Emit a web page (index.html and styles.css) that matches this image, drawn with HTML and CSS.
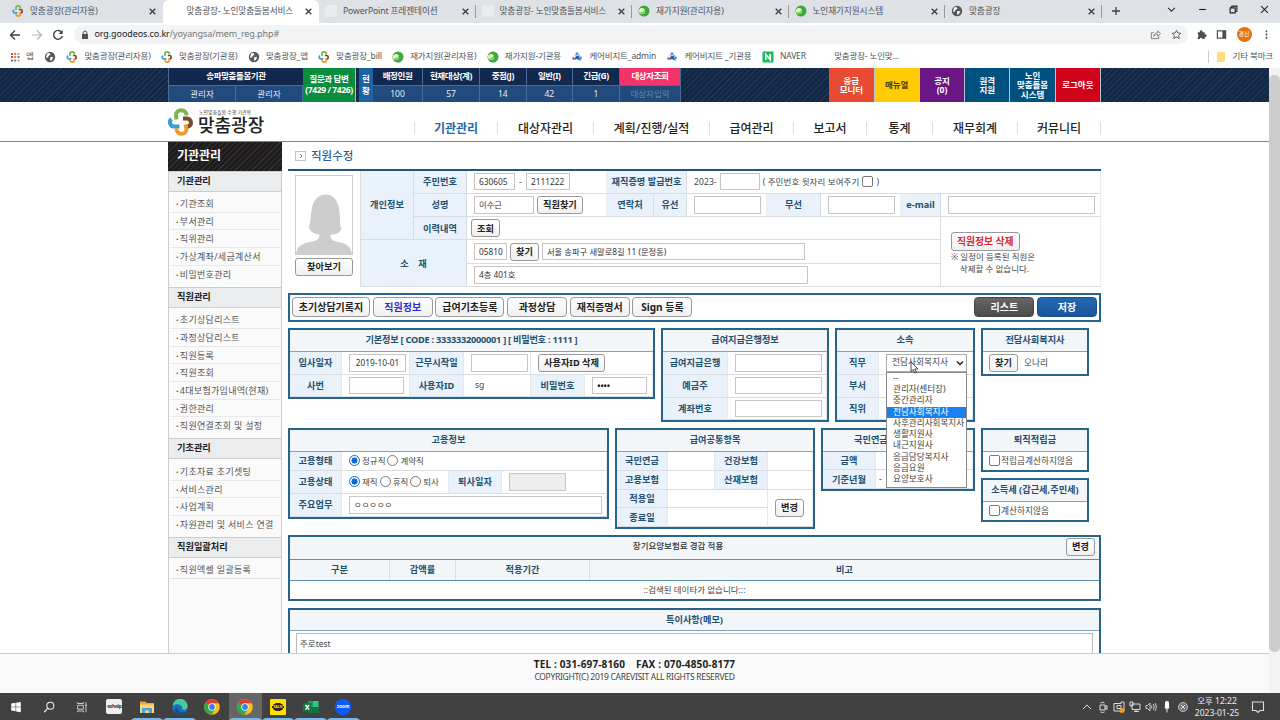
FILE: index.html
```html
<!DOCTYPE html>
<html lang="ko">
<head>
  <meta charset="UTF-8" />
  <title>맞춤광장- 노인맞춤돌봄서비스</title>
  <link rel="stylesheet" href="styles.css">
</head>

<body>
  <!-- shared icons -->
  <svg class="defs" width="0" height="0">
    <symbol id="i-logo" viewBox="0 0 26 28">
      <path d="M8.500 11.500L8 7.500a5 5 0 0 1 10.500 0" fill="none" stroke="#7ab648" stroke-width="4"/>
      <path d="M11.500 18.500H7a4.300 4.300 0 0 1-3.500-7.500" fill="none" stroke="#3b9fd0" stroke-width="4"/>
      <path d="M15 10.500h4a4.200 4.200 0 0 1 1.500 8h-2" fill="none" stroke="#7a4a2b" stroke-width="4"/>
      <path d="M8.500 20.500a5 5 0 0 0 10 .5l-1-4.500" fill="none" stroke="#ee9a2c" stroke-width="4"/>
    </symbol>
    <symbol id="i-globe" viewBox="0 0 12 12">
      <circle cx="6" cy="6" r="5.200" fill="#54585d"/>
      <path d="M3 2.500l2.500-.5 1 1.500-2 1.500-.5 1.500-2 .3zM6.500 6l2.800.3L8 8.800 6.500 10 6 8z" fill="#fff"/>
    </symbol>
    <symbol id="i-green" viewBox="0 0 12 12">
      <circle cx="6" cy="6" r="5.500" fill="#3aaa3f"/>
      <circle cx="4" cy="6" r="3" fill="#e9f3b8"/>
      <path d="M2.500 8q3 1 4-2.500" stroke="#3aaa3f" fill="none"/>
    </symbol>
    <symbol id="i-care" viewBox="0 0 12 12">
      <path d="M2 3l3 2-2 4 3-1 4 2-2-4 1-2-3 1z" fill="#2c5fa8"/>
      <circle cx="6" cy="2.800" r="1.500" fill="#4b8fd4"/>
      <circle cx="9.500" cy="7" r="1.400" fill="#4b8fd4"/>
      <circle cx="2.500" cy="7.500" r="1.300" fill="#8a5a9a"/>
    </symbol>
    <symbol id="i-chrome" viewBox="0 0 16 16">
      <circle cx="8" cy="8" r="7.800" fill="#fbc116"/>
      <path d="M8 8L1.200 4.100A7.800 7.800 0 0 1 14.800 4.200H8z" fill="#e33b2e"/>
      <path d="M8 8l-6.800-3.900A7.800 7.800 0 0 0 7.500 15.800L11.400 9.500z" fill="#2da94f"/>
      <circle cx="8" cy="8" r="3.700" fill="#fff"/>
      <circle cx="8" cy="8" r="2.900" fill="#3b7ded"/>
    </symbol>
    <symbol id="i-x" viewBox="0 0 8 8">
      <path d="M1.500 1.500l5 5M6.500 1.500l-5 5" stroke="#3c4043" stroke-width="1.200"/>
    </symbol>
  </svg>

  <div class="tabs">
    <div class="tab"><svg class="fav"><use href="#i-logo"/></svg><span>맞춤광장(관리자용)</span><svg class="x"><use href="#i-x"/></svg></div>
    <div class="tab active"><i class="fav"></i><span>맞춤광장- 노인맞춤돌봄서비스</span><svg class="x"><use href="#i-x"/></svg></div>
    <div class="tab line"><i class="fav blank"></i><span>PowerPoint 프레젠테이션</span><svg class="x"><use href="#i-x"/></svg></div>
    <div class="tab line"><i class="fav blank"></i><span>맞춤광장- 노인맞춤돌봄서비스</span><svg class="x"><use href="#i-x"/></svg></div>
    <div class="tab line"><svg class="fav"><use href="#i-green"/></svg><span>재가지원(관리자용)</span><svg class="x"><use href="#i-x"/></svg></div>
    <div class="tab line"><svg class="fav"><use href="#i-green"/></svg><span>노인재가지원시스템</span><svg class="x"><use href="#i-x"/></svg></div>
    <div class="tab line"><svg class="fav"><use href="#i-globe"/></svg><span>맞춤광장</span><svg class="x"><use href="#i-x"/></svg></div>
    <svg class="plus" viewBox="0 0 10 10"><path d="M5 1v8M1 5h8" stroke="#3c4043" stroke-width="1.300"/></svg>
    <div class="win">
      <svg viewBox="0 0 8 8"><path d="M1 2.500l3 3 3-3" fill="none" stroke="#333"/></svg>
      <svg viewBox="0 0 8 8"><path d="M1 4h6" stroke="#222"/></svg>
      <svg viewBox="0 0 8 8"><path d="M1 2.500h4.500V7H1zM2.500 2.500V1H7v4.500H5.500" fill="none" stroke="#222"/></svg>
      <svg viewBox="0 0 8 8"><path d="M1 1l6 6M7 1L1 7" stroke="#222" stroke-width=".9"/></svg>
    </div>
  </div>

  <div class="toolbar">
    <svg class="nav-ico" viewBox="0 0 12 12"><path d="M11 6H1.500M6 1.500L1.500 6 6 10.500" fill="none" stroke="#3c4043" stroke-width="1.300"/></svg>
    <svg class="nav-ico" viewBox="0 0 12 12"><path d="M1 6h9.500M6 1.500L10.500 6 6 10.500" fill="none" stroke="#b5b8bb" stroke-width="1.200"/></svg>
    <svg class="nav-ico" viewBox="0 0 12 12"><path d="M9.800 3.500A4.400 4.400 0 1 0 10.300 7" fill="none" stroke="#3c4043" stroke-width="1.400"/><path d="M10.700 1v4h-4z" fill="#3c4043"/></svg>
    <div class="omnibox">
      <svg class="lock" viewBox="0 0 8 10"><path d="M2.200 4V2.800a1.800 1.800 0 0 1 3.600 0V4" fill="none" stroke="#4b4f53"/><rect x="1" y="4" width="6" height="5" rx=".6" fill="#4b4f53"/></svg>
      <span class="url"><b>org.goodeos.co.kr</b>/yoyangsa/mem_reg.php#</span>
      <svg class="obi" viewBox="0 0 12 12"><path d="M4 4H1.500v6.500h8V8" fill="none" stroke="#777"/><path d="M4 8c.3-2.500 2-4 4.500-4V2l3 3-3 3V6C6.500 6 5 6.500 4 8z" fill="none" stroke="#777" stroke-width=".9"/></svg>
      <svg class="obi" viewBox="0 0 12 12"><path d="M6 1.300l1.400 3 3.300.4-2.400 2.300.6 3.300L6 8.700l-2.900 1.600.6-3.300L1.300 4.700l3.300-.4z" fill="none" stroke="#555"/></svg>
    </div>
    <div class="exts">
      <svg viewBox="0 0 12 12"><path d="M2 3.500h2.200a1.500 1.500 0 1 1 2.800 0h2.500V6a1.500 1.500 0 1 1 0 2.800V11H7a1.400 1.400 0 0 0-2.800 0H2V8.500a1.400 1.400 0 0 0 0-2.600z" fill="#4b4f53"/></svg>
      <svg viewBox="0 0 12 12"><rect x="1.500" y="2" width="9" height="8" fill="none" stroke="#4b4f53" stroke-width="1.300"/><path d="M7 2h3.500v8H7z" fill="#4b4f53"/></svg>
      <span class="avatar">경신</span>
      <svg viewBox="0 0 12 12"><path d="M6 1.500v2M6 5v2M6 8.500v2" stroke="#4b4f53" stroke-width="1.700"/></svg>
    </div>
  </div>

  <div class="bookmarks">
    <div class="bm apps"><svg viewBox="0 0 12 12"><path d="M2 3h2M2 6h2M2 9.500h2" stroke="#d9453a" stroke-width="2"/><path d="M5.200 3h2M5.200 6h2" stroke="#e07b3c" stroke-width="2"/><path d="M5.200 9.500h2M8.500 6h2" stroke="#3f7ed8" stroke-width="2"/><path d="M8.500 3h2M8.500 9.500h2" stroke="#d9a53a" stroke-width="2"/></svg><span>앱</span></div>
    <div class="bm"><svg><use href="#i-globe"/></svg></div>
    <div class="bm"><svg><use href="#i-logo"/></svg><span>맞춤광장(관리자용)</span></div>
    <div class="bm"><svg><use href="#i-logo"/></svg><span>맞춤광장(기관용)</span></div>
    <div class="bm"><svg><use href="#i-globe"/></svg><span>맞춤광장_앱</span></div>
    <div class="bm"><svg><use href="#i-logo"/></svg><span>맞춤광장_bill</span></div>
    <div class="bm"><svg><use href="#i-green"/></svg><span>재가지원(관리자용)</span></div>
    <div class="bm"><svg><use href="#i-green"/></svg><span>재가지원-기관용</span></div>
    <div class="bm"><svg><use href="#i-care"/></svg><span>케어비지트_admin</span></div>
    <div class="bm"><svg><use href="#i-care"/></svg><span>케어비지트 _기관용</span></div>
    <div class="bm"><svg viewBox="0 0 12 12"><rect x=".5" y=".5" width="11" height="11" fill="#0fbf60"/><path d="M3.800 9V3.500l4.400 5V3" fill="none" stroke="#fff" stroke-width="1.700"/></svg><span>NAVER</span></div>
    <div class="bm"><svg></svg><span>맞춤광장- 노인맞...</span></div>
    <div class="bm other"><svg viewBox="0 0 12 12"><path d="M2 1h8v9l-2 1H2z" fill="#fbdf7c"/></svg><span>기타 북마크</span></div>
  </div>

  <div class="viewport">
    <div class="page">
      <div class="topbar">
        <div class="wrap">
          <div class="org">
            <b>송파맞춤돌봄기관</b>
            <span>관리자</span><span>관리자</span>
          </div>
          <div class="qna">질문과 답변<br>(7429 / 7426)</div>
          <div class="now">현<br>황</div>
          <div class="stats">
            <div><b>배정인원</b><span>100</span></div>
            <div><b>현재대상(계)</b><span>57</span></div>
            <div><b>중점(J)</b><span>14</span></div>
            <div><b>일반(I)</b><span>42</span></div>
            <div><b>긴급(G)</b><span>1</span></div>
            <div class="search"><b>대상자조회</b><span>대상자입력</span></div>
          </div>
          <div class="quick">
            <div class="q-red">응급<br>모니터</div>
            <div class="q-yellow">매뉴얼</div>
            <div class="q-purple">공지<br>(0)</div>
            <div class="q-blue">원격<br>지원</div>
            <div class="q-blue">노인<br>맞춤돌봄<br>시스템</div>
            <div class="q-out">로그아웃</div>
          </div>
        </div>
      </div>

      <div class="header">
        <div class="wrap">
          <div class="logo">
            <svg><use href="#i-logo"/></svg>
            <div><small>노인맞춤돌봄 수행 기관용</small><strong>맞춤광장</strong></div>
          </div>
          <div class="gnb">
            <a class="on">기관관리</a>
            <a>대상자관리</a>
            <a>계획/진행/실적</a>
            <a>급여관리</a>
            <a>보고서</a>
            <a>통계</a>
            <a>재무회계</a>
            <a>커뮤니티</a>
          </div>
        </div>
      </div>

      <div class="wrap content">
        <div class="side">
          <h2>기관관리</h2>
          <h3>기관관리</h3>
          <ul><li>기관조회</li><li>부서관리</li><li>직위관리</li><li>가상계좌/세금계산서</li><li>비밀번호관리</li></ul>
          <h3>직원관리</h3>
          <ul><li>초기상담리스트</li><li>과정상담리스트</li><li>직원등록</li><li>직원조회</li><li>4대보험가입내역(현재)</li><li>권한관리</li><li>직원연결조회 및 설정</li></ul>
          <h3>기초관리</h3>
          <ul><li>기초자료 초기셋팅</li><li>서비스관리</li><li>사업계획</li><li>자원관리 및 서비스 연결</li></ul>
          <h3>직원일괄처리</h3>
          <ul class="last"><li>직원엑셀 일괄등록</li></ul>
        </div>

        <div class="main">
          <h1><i><svg viewBox="0 0 6 6"><path d="M2 1l2 2-2 2" fill="none" stroke="#6b7f99"/></svg></i>직원수정</h1>

          <div class="person">
            <div class="photo">
              <svg viewBox="0 0 58 80" preserveAspectRatio="none"><path d="M31 19C22 19 17 26 16 36C15 43 15 48 13.500 52C14 57 18 59 24 60C25 64 22 66 18 67C8 69 1 71 0 80H58C57 71 50 69 41 67C37 66 35 64 36 60C42 60 46 58 47 54C45 50 46 42 45 36C44 25 38 19 31 19Z" fill="#cdcdcd"/></svg>
              <button class="btn">찾아보기</button>
            </div>
            <div class="th tall3">개인정보</div>
            <div class="th">주민번호</div>
            <div class="td"><span class="inp w41">630605</span><span class="dash">-</span><span class="inp w44">2111222</span></div>
            <div class="th span2">재직증명 발급번호</div>
            <div class="td rest issue">2023-<span class="inp w40"></span><span>( 주민번호 뒷자리 보여주기</span><i class="check"></i><span>)</span></div>

            <div class="th">성명</div>
            <div class="td"><span class="inp w60">이수근</span><button class="btn">직원찾기</button></div>
            <div class="th">연락처</div>
            <div class="th">유선</div>
            <div class="td"><span class="inp w67"></span></div>
            <div class="th">무선</div>
            <div class="td"><span class="inp w67"></span></div>
            <div class="th">e-mail</div>
            <div class="td"><span class="inp w147"></span></div>

            <div class="th">이력내역</div>
            <div class="td span7 tight"><button class="btn">조회</button></div>
            <div class="td tall3 del">
              <button class="btn red">직원정보 삭제</button>
              <p>※ 일정이 등록된 직원은<br>&nbsp;&nbsp;&nbsp; 삭제할 수 없습니다.</p>
            </div>

            <div class="th addr">소&nbsp;&nbsp;&nbsp; 재</div>
            <div class="td span7"><span class="inp w33">05810</span><button class="btn">찾기</button><span class="inp w263">서울 송파구 새말로8길 11 (문정동)</span></div>
            <div class="td span7"><span class="inp w334">4층 401호</span></div>
          </div>

          <div class="actions">
            <button class="btn w78">초기상담기록지</button>
            <button class="btn on">직원정보</button>
            <button class="btn w69">급여기초등록</button>
            <button class="btn">과정상담</button>
            <button class="btn">재직증명서</button>
            <button class="btn">Sign 등록</button>
            <button class="btn list">리스트</button>
            <button class="btn save">저장</button>
          </div>

          <div class="row row1">
            <div class="box">
              <h4 class="narrow">기본정보 [ CODE : 3333332000001 ] [ 비밀번호 : 1111 ]</h4>
              <div class="grid basic">
                <div class="th">입사일자</div>
                <div class="td"><span class="inp w57 mid">2019-10-01</span></div>
                <div class="th">근무시작일</div>
                <div class="td"><span class="inp w57"></span></div>
                <div class="td span2"><button class="btn">사용자ID 삭제</button></div>
                <div class="th">사번</div>
                <div class="td"><span class="inp w55"></span></div>
                <div class="th">사용자ID</div>
                <div class="td"><span class="plain">sg</span></div>
                <div class="th">비밀번호</div>
                <div class="td"><span class="inp w55 pw">••••</span></div>
              </div>
            </div>
            <div class="box">
              <h4>급여지급은행정보</h4>
              <div class="grid bank">
                <div class="th">급여지급은행</div><div class="td"><span class="inp w87"></span></div>
                <div class="th">예금주</div><div class="td"><span class="inp w87"></span></div>
                <div class="th">계좌번호</div><div class="td"><span class="inp w87"></span></div>
              </div>
            </div>
            <div class="box">
              <h4>소속</h4>
              <div class="grid dept">
                <div class="th">직무</div>
                <div class="td">
                  <div class="select">전담사회복지사
                    <svg class="caret" viewBox="0 0 8 8"><path d="M1 2.500l3 3 3-3" fill="none" stroke="#222" stroke-width="1.500"/></svg>
                    <ul class="options">
                      <li>--</li>
                      <li>관리자(센터장)</li>
                      <li>중간관리자</li>
                      <li class="sel">전담사회복지사</li>
                      <li>사후관리사회복지사</li>
                      <li>생활지원사</li>
                      <li>내근지원사</li>
                      <li>응급담당복지사</li>
                      <li>응급요원</li>
                      <li>요양보호사</li>
                    </ul>
                    <svg class="cursor" viewBox="0 0 9 13"><path d="M1 1v9.500l2.300-2 1.500 3.500 1.500-.7-1.500-3.300H8z" fill="#fff" stroke="#222" stroke-width=".8"/></svg>
                  </div>
                </div>
                <div class="th">부서</div><div class="td"></div>
                <div class="th">직위</div><div class="td"></div>
              </div>
            </div>
            <div class="box">
              <h4>전담사회복지사</h4>
              <div class="single find"><button class="btn">찾기</button><span>오나리</span></div>
            </div>
          </div>

          <div class="row row2">
            <div class="box">
              <h4>고용정보</h4>
              <div class="grid employ">
                <div class="th">고용형태</div>
                <div class="td rest"><i class="radio on"></i>정규직<i class="radio"></i>계약직</div>
                <div class="th">고용상태</div>
                <div class="td"><i class="radio on"></i>재직<i class="radio"></i>휴직<i class="radio"></i>퇴사</div>
                <div class="th">퇴사일자</div>
                <div class="td"><span class="inp w57 off"></span></div>
                <div class="th">주요업무</div>
                <div class="td rest"><span class="inp w253">ㅇㅇㅇㅇㅇ</span></div>
              </div>
            </div>
            <div class="box">
              <h4>급여공통항목</h4>
              <div class="grid common">
                <div class="th">국민연금</div><div class="td"></div><div class="th">건강보험</div><div class="td"></div>
                <div class="th">고용보험</div><div class="td"></div><div class="th">산재보험</div><div class="td"></div>
                <div class="th">적용일</div><div class="td span2"></div>
                <div class="td tall2"><button class="btn">변경</button></div>
                <div class="th">종료일</div><div class="td span2"></div>
              </div>
            </div>
            <div class="box">
              <h4 class="pension-title">국민연금</h4>
              <div class="grid pension">
                <div class="th">금액</div><div class="td"></div>
                <div class="th">기준년월</div><div class="td">-</div>
              </div>
            </div>
            <div class="stack">
              <div class="box">
                <h4>퇴직적립금</h4>
                <div class="single"><i class="check"></i>적립금계산하지않음</div>
              </div>
              <div class="box">
                <h4>소득세 (갑근세,주민세)</h4>
                <div class="single"><i class="check"></i>계산하지않음</div>
              </div>
            </div>
          </div>

          <div class="box care">
            <div class="care-title"><span>장기요양보험료 경감 적용</span><button class="btn">변경</button></div>
            <div class="care-head"><div>구분</div><div>감액률</div><div>적용기간</div><div>비고</div></div>
            <div class="empty">::검색된 데이타가 없습니다:::</div>
          </div>

          <div class="box memo">
            <h4>특이사항(메모)</h4>
            <div class="textarea">주로test</div>
          </div>
        </div>
      </div>

      <div class="footer">
        <b>TEL : 031-697-8160 &nbsp;&nbsp; FAX : 070-4850-8177</b>
        <span>COPYRIGHT(C) 2019 CAREVISIT ALL RIGHTS RESERVED</span>
      </div>
    </div>
    <div class="scroll"><div class="thumb"></div></div>
  </div>

  <div class="taskbar">
    <div class="apps-row">
      <div><svg viewBox="0 0 16 16"><path d="M2.500 4l5-.8v4.500h-5zM8.200 3.100l5.300-.9v5.500H8.200zM2.500 8.400h5v4.500l-5-.8zM8.200 8.400h5.300v5.500l-5.300-.9z" fill="#fff"/></svg></div>
      <div><svg viewBox="0 0 16 16"><circle cx="9.500" cy="6.500" r="4" fill="none" stroke="#eee" stroke-width="1.200"/><path d="M6.500 9.500L2.500 14" stroke="#eee" stroke-width="1.300"/></svg></div>
      <div><svg viewBox="0 0 16 16"><path d="M3 2.500v1.500h6.500V2.500M3 14v-1.500h6.500V14M3 6h6.500v4.500H3zM12.500 2.500V14M11.500 6h2" fill="none" stroke="#ddd"/></svg></div>
      <div class="ez"><span>ezhelp</span></div>
      <div class="run"><svg viewBox="0 0 16 16"><path d="M1 2.500h5.500L8 4h7v10H1z" fill="#e8a93a"/><path d="M1 5.500h14V14H1z" fill="#fbd676"/><path d="M3 14V9h10v5h-3v-2.500H6V14z" fill="#4aa3dd"/></svg></div>
      <div class="run"><svg viewBox="0 0 16 16"><circle cx="8" cy="8" r="7.600" fill="#1a6fc4"/><path d="M.6 7A7.500 7.500 0 0 1 15.600 7.500c0 2.500-2 3.500-4.500 3-1.500-.3-1-1-.9-2C10.200 5 4 4 .6 7z" fill="#48cba0"/><path d="M5.500 8c-.5 4 2.500 6 7.500 5-3 4-8 3-9.500 0-1-2.500 0-4.500 2-5z" fill="#174f92"/></svg></div>
      <div><svg><use href="#i-chrome"/></svg></div>
      <div class="run cur"><svg><use href="#i-chrome"/></svg></div>
      <div class="run talk"><span>TALK</span></div>
      <div class="run"><svg viewBox="0 0 16 16"><path d="M5 2h10.500v12H5z" fill="#1f9e5e"/><path d="M10 2h5.500v6H10z" fill="#33c481"/><path d="M5 8h10.500v6H5z" fill="#17703f"/><rect y="4" width="8.500" height="8.500" fill="#107c41"/><path d="M2.500 6l3.600 4.600M6.100 6L2.500 10.600" stroke="#fff" stroke-width="1.300"/></svg></div>
      <div class="run zm"><span>zoom</span></div>
    </div>
    <div class="tray">
      <svg viewBox="0 0 12 12"><path d="M2 8l4-4 4 4" fill="none" stroke="#ddd"/></svg>
      <svg viewBox="0 0 12 12"><path d="M3 4h5v5H3zM8 6l2-1.500v4L8 7M3.500 2q2-1.500 4 0M3.500 11q2 1.200 4 0" fill="none" stroke="#ddd"/></svg>
      <svg viewBox="0 0 12 12"><path d="M1 2.500h7V1h3v9H1zM4 4.500h4v3H4z" fill="none" stroke="#ddd"/><circle cx="9" cy="9.500" r="2.500" fill="#f09a2a"/></svg>
      <svg viewBox="0 0 12 12"><path d="M3 3h8v5.500H3zM5 10.500h5M7 8.500v2M1 1h3v4H1z" fill="none" stroke="#ddd"/></svg>
      <svg viewBox="0 0 12 12"><path d="M1 4.500h1.500L5 2v8L2.500 7.500H1zM6.500 4.500q1 1.500 0 3M8.300 3q2 3 0 6M10.200 2q2.500 4 0 8" fill="none" stroke="#ddd" stroke-width=".9"/></svg>
      <svg viewBox="0 0 12 12"><rect x="4" y="0" width="4" height="7.500" rx="1.500" fill="#fff"/><path d="M6 7v4.500M3.500 6.500q2.500 3 5 0" fill="none" stroke="#ddd"/></svg>
      <svg viewBox="0 0 12 12"><circle cx="6" cy="6" r="4.500" fill="#777" stroke="#bbb"/><path d="M4 4l4 4M8 4L4 8" stroke="#ddd"/></svg>
      <div class="clock">오후 12:22<br>2023-01-25</div>
      <svg class="noti" viewBox="0 0 14 14"><path d="M1.500 2h11v8.500H9l-2 2-2-2H1.500z" fill="none" stroke="#ddd" stroke-width="1.100"/></svg>
    </div>
  </div>
</body>
</html>
```
FILE: styles.css
```css
* {
  box-sizing: border-box;
  margin: 0;
  padding: 0;
}

body {
  width: 1280px;
  height: 720px;
  overflow: hidden;
  display: flex;
  flex-direction: column;
  background-color: #fff;
  font-family: "Noto Sans", "Noto Sans CJK KR", sans-serif;
  font-size: 8.5px;
  line-height: 1.2;
  color: #444;
  white-space: nowrap;
}

ul {
  list-style: none;
}

svg {
  display: block;
  flex: none;
}

.defs {
  position: absolute;
}

/* browser tabs */
.tabs {
  height: 23px;
  flex: none;
  display: flex;
  align-items: stretch;
  padding-left: 6px;
  background-color: #dee1e6;
}

.tab {
  width: 156.500px;
  height: 22px;
  display: flex;
  align-items: center;
  padding: 0 6px;
  font-size: 8.7px;
  letter-spacing: -0.15px;
  color: #50545a;
}

.tab .fav {
  width: 12px;
  height: 12px;
  margin-right: 6px;
}

.tab .fav.blank {
  background-color: #e9ebee;
}

.tab span {
  flex: 1;
}

.tab .x {
  width: 9px;
  height: 9px;
}

.tab.active {
  height: 23px;
  background-color: #fff;
  border-radius: 6px 6px 0 0;
}

.tab.line {
  position: relative;
}

.tab.line::after {
  content: "";
  position: absolute;
  right: 0;
  top: 5px;
  width: 1px;
  height: 13px;
  background-color: #96999e;
}

.plus {
  width: 10px;
  height: 10px;
  margin: 6px 0 0 9px;
}

.win {
  display: flex;
  gap: 22px;
  margin-left: auto;
  padding: 5px 11px 0 0;
}

.win svg {
  width: 9px;
  height: 9px;
}

/* address bar */
.toolbar {
  height: 22px;
  flex: none;
  display: flex;
  align-items: center;
  padding: 2px 9px 1px;
}

.nav-ico {
  width: 12px;
  height: 12px;
  margin-right: 9.5px;
}

.omnibox {
  flex: none;
  width: 1114px;
  height: 19px;
  display: flex;
  align-items: center;
  gap: 10px;
  padding: 0 6px 0 7px;
  border-radius: 10px;
  background-color: #f1f3f4;
}

.lock {
  width: 8px;
  height: 10px;
}

.url {
  flex: 1;
  margin-left: -4px;
  font-size: 9px;
  letter-spacing: -0.1px;
  color: #777;
}

.url b {
  font-weight: 400;
  color: #222;
}

.obi {
  width: 11px;
  height: 11px;
}

.exts {
  display: flex;
  align-items: center;
  gap: 9.5px;
  margin-left: 8px;
}

.exts svg {
  width: 11px;
  height: 11px;
}

.avatar {
  width: 15px;
  height: 15px;
  border-radius: 50%;
  background-color: #e8710a;
  color: #fff;
  font-size: 6px;
  line-height: 15px;
  text-align: center;
}

.bookmarks {
  height: 23px;
  flex: none;
  display: flex;
  align-items: center;
  gap: 10.400px;
  padding: 0 7px 0 9px;
}

.bm {
  display: flex;
  align-items: center;
  gap: 6px;
  letter-spacing: -0.15px;
  color: #50545a;
}

.bm svg {
  width: 12px;
  height: 12px;
}

.bm.apps {
  gap: 5px;
}

.bm.other {
  margin-left: auto;
  padding-left: 6px;
  border-left: 1px solid #ccc;
}

/* site */
.viewport {
  height: 625px;
  flex: none;
  display: flex;
}

.page {
  width: 1269px;
  height: 625px;
  display: flex;
  flex-direction: column;
}

.scroll {
  width: 11px;
  padding-top: 7px;
  background-color: #f3f3f3;
}

.thumb {
  height: 577px;
  border-radius: 5px;
  background-color: #cdcdcd;
}

.wrap {
  width: 933px;
  margin-left: 168px;
  display: flex;
}

.topbar {
  height: 34px;
  flex: none;
  background: repeating-linear-gradient(135deg, #132845 0 3px, #1d3655 3px 4px);
}

.topbar b,
.topbar span {
  display: flex;
  align-items: center;
  justify-content: center;
  height: 17px;
}

.topbar b {
  background-color: #11294f;
  color: #fff;
  letter-spacing: -0.4px;
}

.topbar span {
  background-color: #224a7d;
  color: #e6edf5;
}

.org {
  width: 135px;
  display: grid;
  grid-template-columns: 1fr 1fr;
  border-left: 1px solid #4a6b95;
}

.org b {
  grid-column: span 2;
}

.org span {
  border-top: 1px solid #4a6b95;
  border-right: 1px solid #4a6b95;
}

.qna {
  width: 53px;
  padding-top: 6px;
  background-color: #0c8c3f;
  border-right: 1px solid #9fc7ae;
  color: #fff;
  font-weight: 700;
  line-height: 10.5px;
  text-align: center;
  letter-spacing: -0.4px;
}

.now {
  width: 14px;
  margin-left: 3px;
  padding-top: 5px;
  background-color: #1c62a5;
  color: #fff;
  font-weight: 700;
  line-height: 12px;
  text-align: center;
}

.stats {
  display: grid;
  grid-template-columns: 50px 57px 46.500px 46.500px 47px 61px;
}

.stats div {
  border-right: 1px solid #4a6b95;
}

.stats span {
  border-top: 1px solid #4a6b95;
}

.stats .search b {
  background-color: #f2326b;
}

.stats .search span {
  color: #6685aa;
}

.quick {
  display: grid;
  grid-template-columns: repeat(6, 45.3px);
  margin-left: auto;
}

.quick div {
  display: flex;
  align-items: center;
  justify-content: center;
  border-right: 1px solid #b9c3cf;
  color: #fff;
  font-weight: 700;
  font-size: 8.5px;
  line-height: 9.5px;
  text-align: center;
}

.quick .q-red {
  background-color: #e84b31;
}

.quick .q-yellow {
  background-color: #ffcb05;
  color: #4a3a12;
}

.quick .q-purple {
  background-color: #6a1685;
}

.quick .q-blue {
  background-color: #00517f;
}

.quick .q-out {
  background-color: #d0021b;
}

.header {
  height: 40px;
  flex: none;
  border-bottom: 1px solid #5d9098;
}

.logo {
  width: 246px;
  display: flex;
  padding-top: 6px;
}

.logo svg {
  width: 26px;
  height: 28px;
}

.logo small {
  display: block;
  margin: 1px 0 0 5px;
  font-size: 5px;
  line-height: 6px;
  letter-spacing: -0.1px;
}

.logo strong {
  display: block;
  margin-left: 4px;
  font-size: 18px;
  line-height: 21px;
  font-weight: 500;
  color: #222;
}

.gnb {
  height: 40px;
  display: grid;
  grid-template-columns: 83px 96px 116px 84px 73px 66px 85px 84px;
  padding-top: 20px;
}

.gnb a {
  height: 13px;
  line-height: 13px;
  border-left: 1px solid #ddd;
  text-align: center;
  font-size: 12px;
  font-weight: 500;
  color: #222;
}

.gnb a:last-child {
  border-right: 1px solid #ddd;
}

.gnb .on {
  color: #1f6aa5;
  font-weight: 700;
}

.content {
  height: 511px;
  overflow: hidden;
}

/* left menu */
.side {
  width: 114px;
  height: 520px;
  flex: none;
  margin-right: 6px;
  border: 1px solid #ccc;
  border-top: 0;
  background-color: #fafafa;
}

.side h2 {
  height: 28.500px;
  margin: 0 -1px;
  padding-left: 9px;
  background: repeating-linear-gradient(135deg, #1e1c1d 0 3px, #343233 3px 4px);
  color: #fff;
  font-size: 12px;
  line-height: 28px;
}

.side h3 {
  height: 21px;
  padding-left: 8px;
  border-top: 1px solid #ccc;
  border-bottom: 1px solid #ccc;
  background-color: #ebecee;
  color: #222;
  font-size: 9.2px;
  line-height: 18px;
}

.side ul {
  padding: 3.5px 1px 3.3px;
}

.side li {
  height: 17.7px;
  padding-left: 6px;
  border-bottom: 1px solid #e8e8e8;
  font-size: 9px;
  line-height: 18px;
  letter-spacing: 0.3px;
  color: #555;
}

.side li:last-child {
  border-bottom: 0;
}

.side .last li {
  border-bottom: 1px solid #e0e0e0;
}

.side li::before {
  content: "·";
  margin-right: 1px;
  font-weight: 700;
}

/* form */
.main {
  width: 813px;
  flex: none;
}

h1 {
  height: 26.500px;
  display: flex;
  align-items: center;
  padding: 1px 0 0 7px;
  font-size: 11.5px;
  font-weight: 500;
  color: #2a5f95;
}

h1 i {
  width: 11px;
  height: 10px;
  margin-right: 5px;
  padding: 1px 2px;
  border: 1px solid #bcc5d0;
}

h1 svg {
  width: 6px;
  height: 6px;
}

.th,
.td {
  display: flex;
  align-items: center;
  border-right: 1px solid #d9dde0;
  border-bottom: 1px solid #d9dde0;
}

.th {
  justify-content: center;
  background-color: #e9f2fa;
  color: #24506f;
  font-size: 9.2px;
  font-weight: 700;
}

.td {
  gap: 3px;
  padding-left: 7px;
}

.person {
  display: grid;
  grid-template-columns: 73px 53px 53px 140px 47px 33px 80px 54px 80px 40px 160px;
  grid-template-rows: repeat(5, 23.300px);
  border-top: 2px solid #24557f;
}

.person .td:not(.span7) {
  border-right-color: #e9eef2;
}

.photo {
  grid-row: span 5;
  padding: 4px 0 0 7px;
  border-right: 1px solid #ddd;
}

.photo svg {
  width: 58px;
  height: 80px;
  border: 1px solid #ccc;
}

.photo .btn {
  width: 58px;
  margin-top: 3px;
}

.tall2 {
  grid-row: span 2;
}

.tall3 {
  grid-row: span 3;
}

.span2 {
  grid-column: span 2;
}

.span7 {
  grid-column: span 7;
}

.person .rest {
  grid-column: span 5;
}

.person .td.tight {
  padding-left: 4px;
}

.person .addr {
  grid-row: span 2;
  grid-column: 2 / span 2;
}

.issue {
  letter-spacing: 0.1px;
}

.del {
  flex-direction: column;
  align-items: flex-start;
  justify-content: center;
  gap: 0;
  padding: 3px 0 0 10px;
}

.del p {
  line-height: 12px;
}

.inp {
  height: 17.500px;
  flex: none;
  padding-left: 4px;
  border: 1px solid #c6c6c6;
  background-color: #fff;
  font-size: 8.3px;
  line-height: 16px;
  color: #333;
}

.inp.mid {
  padding: 0;
  text-align: center;
}

.inp.off {
  background-color: #eee;
}

.inp.pw {
  font-size: 10px;
  letter-spacing: -0.6px;
  color: #111;
}

.plain {
  padding-left: 4px;
}

.dash {
  width: 3px;
  margin: 0 1px;
}

.w33 { width: 33px; }
.w40 { width: 40px; }
.w41 { width: 41px; }
.w44 { width: 44px; }
.w55 { width: 55px; }
.w57 { width: 57px; }
.w60 { width: 60px; }
.w67 { width: 67px; }
.w87 { width: 87px; }
.w147 { width: 147px; }
.w253 { width: 253px; }
.w263 { width: 263px; }
.w334 { width: 334px; }

.btn {
  height: 18px;
  flex: none;
  padding: 0 5px;
  border: 1px solid #999;
  border-radius: 3px;
  background: linear-gradient(#fff, #f0f0f0);
  font-family: inherit;
  font-size: 9.2px;
  font-weight: 700;
  line-height: 15px;
  color: #222;
}

.btn.red {
  height: 19px;
  font-size: 9.8px;
  color: #e0252f;
}

.check {
  width: 11px;
  height: 11px;
  flex: none;
  border: 1px solid #777;
  border-radius: 2px;
  background-color: #fff;
}

.radio {
  width: 11px;
  height: 11px;
  flex: none;
  border: 1px solid #777;
  border-radius: 50%;
  background-color: #fff;
}

.radio.on {
  border-color: #0b6bd3;
  background: radial-gradient(circle, #0b6bd3 0 2.800px, #fff 3.300px);
}

.actions {
  height: 29px;
  display: flex;
  align-items: center;
  gap: 2.700px;
  margin: 6px 0 6.500px;
  padding: 0 2px;
  border: 2px solid #28638c;
}

.actions .btn {
  width: 60px;
  height: 20px;
  padding: 0;
  border-radius: 4px;
  font-size: 10px;
}

.actions .w78 {
  width: 78px;
}

.actions .w69 {
  width: 69px;
}

.actions .on {
  color: #2a2ad0;
}

.actions .list {
  margin-left: auto;
  border-color: #444;
  background: linear-gradient(#666, #4b4b4b);
  color: #fff;
}

.actions .save {
  border-color: #17508c;
  background: linear-gradient(#2169b3, #1a5599);
  color: #fff;
}

.row {
  display: grid;
  gap: 6px;
  align-items: start;
}

.row1 {
  height: 100px;
  grid-template-columns: 367px 168px 140px 108px;
}

.row2 {
  height: 106.500px;
  grid-template-columns: 321px 200px 154px 108px;
}

.box {
  border: 2px solid #28638c;
  background-color: #fff;
}

.box h4 {
  height: 21.500px;
  border-bottom: 1px solid #7fa6bb;
  background-color: #f3f6f8;
  font-size: 9.2px;
  line-height: 19px;
  text-align: center;
  color: #24506f;
}

.box .narrow {
  letter-spacing: -0.25px;
}

.grid {
  display: grid;
}

.grid .th,
.grid .td {
  border-right-color: #e3e8eb;
}

.basic {
  grid-template-columns: 52px 68px 54px 67px 54px 1fr;
  grid-template-rows: 23px 22px;
}

.bank {
  grid-template-columns: 65px 1fr;
  grid-template-rows: repeat(3, 22.800px);
}

.dept {
  grid-template-columns: 42px 1fr;
  grid-template-rows: repeat(3, 22.800px);
}

.employ {
  grid-template-columns: 52px 107px 53px 1fr;
  grid-template-rows: 19px 23px 23px;
}

.employ .td {
  gap: 2px;
}

.employ .rest {
  grid-column: span 3;
}

.common {
  grid-template-columns: 51px 47px 53px 1fr;
  grid-template-rows: repeat(4, 18.800px);
}

.pension {
  grid-template-columns: 53px 1fr;
  grid-template-rows: 18.500px 18.500px;
}

.box .pension-title {
  padding-left: 31px;
  text-align: left;
}

.pension .td {
  padding-left: 3px;
}

.stack {
  display: grid;
  gap: 6.500px;
}

.single {
  height: 18px;
  display: flex;
  align-items: center;
  gap: 1px;
  padding-left: 6px;
  font-size: 8.7px;
}

.single.find {
  height: 22px;
  gap: 6px;
}

/* open dropdown */
.select {
  position: relative;
  width: 81px;
  height: 17.500px;
  padding-left: 5px;
  border: 1px solid #aaa;
  background-color: #fff;
  line-height: 15px;
  font-size: 8.7px;
}

.caret {
  position: absolute;
  right: 2px;
  top: 4px;
  width: 8px;
  height: 8px;
}

.options {
  position: absolute;
  z-index: 5;
  left: -1px;
  top: 16.500px;
  width: 81px;
  padding-bottom: 1px;
  border: 1px solid #888;
  background-color: #fff;
}

.options li {
  height: 11.300px;
  padding-left: 6px;
  font-size: 8.6px;
  line-height: 11px;
}

.options .sel {
  background-color: #1a80f0;
  color: #fff;
}

.cursor {
  position: absolute;
  z-index: 6;
  left: 23px;
  top: 6px;
  width: 9px;
  height: 13px;
}

.care-title {
  height: 23.500px;
  display: grid;
  grid-template-columns: 1fr auto;
  padding: 1px 4px 0 0;
  border-bottom: 1px solid #5d8fae;
  background-color: #f3f6f8;
  color: #333;
  font-weight: 500;
}

.care-title span {
  padding: 3px 0 0 0;
  text-align: center;
}

.care-head {
  height: 21px;
  display: grid;
  grid-template-columns: 99px 66px 134px 1fr;
  border-bottom: 1px solid #5d8fae;
  background-color: #f3f6f8;
  font-size: 9.2px;
  font-weight: 700;
  line-height: 19px;
  text-align: center;
  color: #24506f;
}

.care-head div + div {
  border-left: 1px solid #ddd;
}

.empty {
  height: 18px;
  line-height: 17px;
  text-align: center;
}

.memo {
  height: 45px;
  margin-top: 6.500px;
  border-bottom: 0;
}

.textarea {
  height: 21px;
  margin: 2px 6px 0;
  padding: 5px 3px 0;
  border: 1px solid #bbb;
  border-bottom: 0;
}

.footer {
  height: 40px;
  flex: none;
  display: flex;
  flex-direction: column;
  align-items: center;
  padding-top: 4px;
  border-top: 1px solid #ccc;
  background-color: #fafafa;
}

.footer b {
  font-size: 10px;
  line-height: 13px;
  letter-spacing: 0.15px;
  color: #222;
}

.footer span {
  line-height: 12px;
  letter-spacing: -0.3px;
}

/* windows taskbar */
.taskbar {
  height: 27px;
  flex: none;
  display: flex;
  justify-content: space-between;
  background-color: #414141;
}

.apps-row {
  display: flex;
}

.apps-row > div {
  width: 32.7px;
  height: 27px;
  display: flex;
  align-items: center;
  justify-content: center;
}

.apps-row > div svg {
  width: 16px;
  height: 16px;
}

.apps-row > div:nth-child(1) svg,
.apps-row > div:nth-child(2) svg,
.apps-row > div:nth-child(3) svg {
  width: 14px;
  height: 14px;
}

.apps-row .run {
  border-bottom: 2px solid #76b9ed;
  border-left: 3px solid #414141;
  border-right: 3px solid #414141;
  padding-top: 2px;
}

.apps-row .cur {
  border-left-color: #666;
  border-right-color: #666;
  background-color: #666;
}

.ez span {
  width: 16px;
  height: 15px;
  border-radius: 2px;
  background-color: #eee;
  color: #333;
  font-size: 5px;
  font-weight: 700;
  line-height: 15px;
  text-align: center;
  letter-spacing: -0.3px;
}

.talk span {
  width: 16px;
  height: 16px;
  border: 2px solid #fae100;
  border-width: 4px 2px;
  border-radius: 1px;
  background: radial-gradient(ellipse, #3b1e1e 0 68%, #fae100 70%);
  color: #fae100;
  font-size: 4px;
  font-weight: 700;
  line-height: 8px;
  text-align: center;
}

.zm span {
  width: 16px;
  height: 16px;
  border-radius: 50%;
  background-color: #0b5cff;
  color: #fff;
  font-size: 4.5px;
  font-weight: 700;
  line-height: 15px;
  text-align: center;
}

.tray {
  display: flex;
  align-items: center;
  gap: 4px;
  padding-right: 15px;
}

.tray svg {
  width: 12px;
  height: 12px;
}

.clock {
  width: 46px;
  margin-left: 1px;
  color: #eee;
  line-height: 12px;
  text-align: center;
}

.tray .noti {
  width: 14px;
  height: 14px;
  margin-left: 7px;
}
```
